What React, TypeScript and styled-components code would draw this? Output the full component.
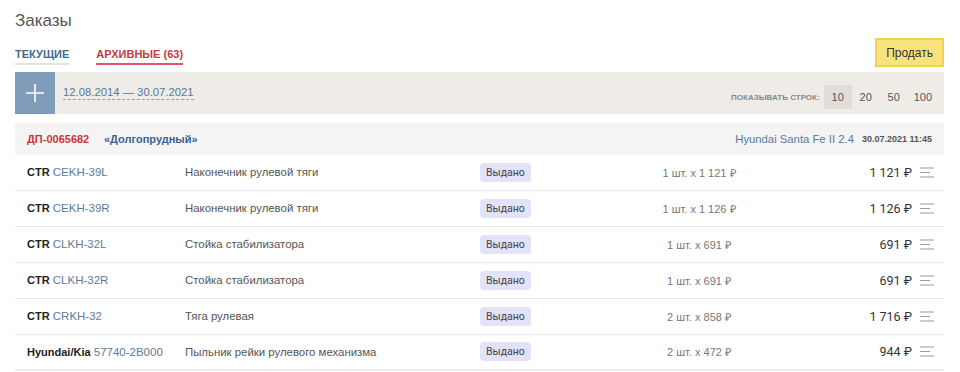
import styled, { createGlobalStyle } from 'styled-components';

const GlobalStyle = createGlobalStyle`
  body {
    margin: 0;
    background: #fff;
    font-family: 'Liberation Sans', Arial, sans-serif;
  }
`;

const Page = styled.div`
  width: 960px;
  padding: 0 16px 0 15px;
  box-sizing: border-box;
`;

const Title = styled.h1`
  margin: 0;
  padding-top: 10px;
  font-size: 17px;
  font-weight: normal;
  color: #555;
  line-height: 22px;
`;

const TabsRow = styled.div`
  display: flex;
  align-items: flex-end;
  justify-content: space-between;
  margin-top: 6px;
  height: 30px;
`;

const Tabs = styled.div`
  display: flex;
  gap: 27px;
  padding-bottom: 3px;
`;

const Tab = styled.span<{ $active?: boolean }>`
  font-size: 11px;
  font-weight: bold;
  color: ${(p) => (p.$active ? '#c33a40' : '#3f6c91')};
  padding-bottom: 2px;
  border-bottom: 2px solid ${(p) => (p.$active ? '#e9545c' : '#dfe3e6')};
  line-height: 13px;
`;

const SellButton = styled.button`
  background: #f8e27c;
  border: 2px solid #f0d24c;
  color: #333;
  font-family: 'Liberation Sans', Arial, sans-serif;
  font-size: 12px;
  height: 29px;
  padding: 0 9px;
  margin-bottom: 1px;
`;

const FilterBar = styled.div`
  display: flex;
  align-items: center;
  background: #efece8;
  height: 42px;
  margin-top: 4px;
`;

const AddButton = styled.div`
  width: 40px;
  height: 42px;
  background: #7f9dbb;
  display: flex;
  align-items: center;
  justify-content: center;
`;

const DateRange = styled.span`
  margin-left: 8px;
  font-size: 11.3px;
  color: #56789a;
  border-bottom: 1px dashed #8aa0b5;
  line-height: 13px;
  white-space: nowrap;
`;

const Pager = styled.div`
  margin-left: auto;
  display: flex;
  align-items: center;
  margin-right: 6px;
  padding-top: 8px;
`;

const PagerLabel = styled.span`
  font-size: 8px;
  font-weight: bold;
  color: #888;
  margin-right: 4px;
`;

const PageNum = styled.span<{ $active?: boolean }>`
  font-size: 11px;
  color: #555;
  padding: 0 6px;
  height: 24px;
  line-height: 24px;
  min-width: 16px;
  text-align: center;
  background: ${(p) => (p.$active ? '#e1ded9' : 'transparent')};
`;

const OrderHead = styled.div`
  display: flex;
  align-items: center;
  background: #f4f4f4;
  height: 32px;
  margin-top: 9px;
  padding: 0 12px;
`;

const OrderNo = styled.span`
  color: #cb3437;
  font-weight: bold;
  font-size: 11px;
  width: 77px;
`;

const Shop = styled.span`
  color: #3d6189;
  font-weight: bold;
  font-size: 11px;
`;

const Car = styled.span`
  margin-left: auto;
  color: #5b7b9b;
  font-size: 11.3px;
`;

const OrderDate = styled.span`
  margin-left: 8px;
  font-size: 9px;
  font-weight: bold;
  color: #555;
`;

const Row = styled.div`
  display: grid;
  grid-template-columns: 158px 295px 126px 186px 1fr 24px;
  align-items: center;
  height: 35px;
  border-bottom: 1px solid #e8e8e8;
  padding: 0 0 1px 12px;
  box-sizing: border-box;
  height: 36px;
  font-size: 11.4px;

  &:last-child {
    border-bottom: 2px solid #eeeeee;
  }
`;

const Brand = styled.span`
  color: #222;
  font-weight: bold;
  font-size: 11px;
`;

const Article = styled.span`
  color: #5d7b9a;
  font-size: 11.5px;
  font-weight: normal;
`;

const PartName = styled.span`
  color: #555;
`;

const Badge = styled.span`
  justify-self: start;
  background: #e2e2fa;
  color: #444;
  font-family: Roboto, 'Liberation Sans', sans-serif;
  font-size: 10.5px;
  padding: 3px 6px;
  border-radius: 4px;
  line-height: 13px;
`;

const Qty = styled.span`
  color: #777;
  text-align: center;
  font-size: 11px;
`;

const Total = styled.span`
  text-align: right;
  color: #333;
  font-family: Roboto, 'Liberation Sans', sans-serif;
  font-size: 12.5px;
  padding-right: 8px;
`;

const MenuIcon = () => (
  <svg width="14" height="11" viewBox="0 0 14 11">
    <path d="M0 1h14M0 5.5h10M0 10h14" stroke="#9a9a9a" strokeWidth="1.2" />
  </svg>
);

const items = [
  { brand: 'CTR', art: 'CEKH-39L', name: 'Наконечник рулевой тяги', qty: '1 шт. x 1 121 ₽', total: '1 121 ₽' },
  { brand: 'CTR', art: 'CEKH-39R', name: 'Наконечник рулевой тяги', qty: '1 шт. x 1 126 ₽', total: '1 126 ₽' },
  { brand: 'CTR', art: 'CLKH-32L', name: 'Стойка стабилизатора', qty: '1 шт. x 691 ₽', total: '691 ₽' },
  { brand: 'CTR', art: 'CLKH-32R', name: 'Стойка стабилизатора', qty: '1 шт. x 691 ₽', total: '691 ₽' },
  { brand: 'CTR', art: 'CRKH-32', name: 'Тяга рулевая', qty: '2 шт. x 858 ₽', total: '1 716 ₽' },
  { brand: 'Hyundai/Kia', art: '57740-2B000', name: 'Пыльник рейки рулевого механизма', qty: '2 шт. x 472 ₽', total: '944 ₽' },
];

export default function App() {
  return (
    <>
      <GlobalStyle />
      <Page>
        <Title>Заказы</Title>
        <TabsRow>
          <Tabs>
            <Tab>ТЕКУЩИЕ</Tab>
            <Tab $active>АРХИВНЫЕ (63)</Tab>
          </Tabs>
          <SellButton>Продать</SellButton>
        </TabsRow>
        <FilterBar>
          <AddButton>
            <svg width="18" height="18" viewBox="0 0 18 18">
              <path d="M9 0v18M0 9h18" stroke="#fff" strokeWidth="1.6" />
            </svg>
          </AddButton>
          <DateRange>12.08.2014 — 30.07.2021</DateRange>
          <Pager>
            <PagerLabel>ПОКАЗЫВАТЬ СТРОК:</PagerLabel>
            <PageNum $active>10</PageNum>
            <PageNum>20</PageNum>
            <PageNum>50</PageNum>
            <PageNum>100</PageNum>
          </Pager>
        </FilterBar>
        <OrderHead>
          <OrderNo>ДП-0065682</OrderNo>
          <Shop>«Долгопрудный»</Shop>
          <Car>Hyundai Santa Fe II 2.4</Car>
          <OrderDate>30.07.2021 11:45</OrderDate>
        </OrderHead>
        {items.map((it, i) => (
          <Row key={i}>
            <span>
              <Brand>{it.brand}</Brand> <Article>{it.art}</Article>
            </span>
            <PartName>{it.name}</PartName>
            <Badge>Выдано</Badge>
            <Qty>{it.qty}</Qty>
            <Total>{it.total}</Total>
            <MenuIcon />
          </Row>
        ))}
      </Page>
    </>
  );
}
